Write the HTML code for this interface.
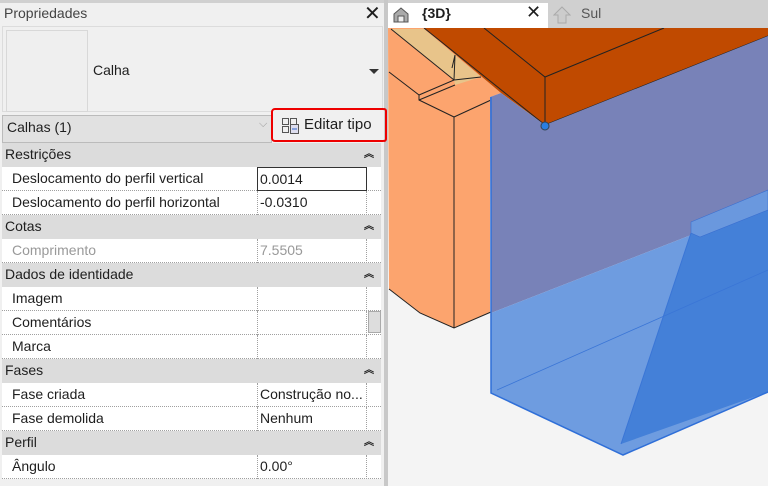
<!DOCTYPE html>
<html><head><meta charset="utf-8"><style>
*{margin:0;padding:0;box-sizing:border-box}
body{width:768px;height:486px;overflow:hidden;background:#d0d0d0;font-family:"Segoe UI","Liberation Sans",sans-serif;font-size:14px;color:#1e1e1e;position:relative}
.a{position:absolute}
.hdr{position:absolute;left:2px;width:379px;height:24px;background:#dcdcdc;padding-left:3px;line-height:23px}
.hdr span{position:absolute;right:7px;top:0;font-size:10px;font-weight:bold}
.row{position:absolute;left:2px;width:379px;height:24px;background:#fff;border-bottom:1px dotted #a0a0a0;line-height:23px}
.row .n{position:absolute;left:10px}
.row .v{position:absolute;left:255px;top:0;width:110px;height:24px;border-left:1px dotted #a0a0a0;padding-left:2px;border-right:1px dotted #a0a0a0}
</style></head><body>
<div class="a" style="left:0;top:0;width:384px;height:486px;background:#f0f0f0"></div>
<div class="a" style="left:0;top:0;width:768px;height:3px;background:#d0d0d0"></div>
<div class="a" style="left:4px;top:5px;color:#444">Propriedades</div>
<div class="a" style="left:364px;top:1px;font-size:20px">✕</div>
<div class="a" style="left:2px;top:26px;width:381px;height:86px;border:1px solid #dcdcdc"></div>
<div class="a" style="left:6px;top:30px;width:82px;height:82px;border:1px solid #d8d8d8;background:#efefef"></div>
<div class="a" style="left:93px;top:62px">Calha</div>
<div class="a" style="left:369px;top:69px;width:0;height:0;border-left:5px solid transparent;border-right:5px solid transparent;border-top:5px solid #333"></div>
<div class="a" style="left:2px;top:115px;width:270px;height:28px;background:#e1e1e1;border:1px solid #bbb;padding:3px 4px">Calhas (1)</div>
<div class="a" style="left:259px;top:118px;color:#999;font-size:11px">⌵</div>
<div class="a" style="left:271px;top:108px;width:116px;height:34px;border:2px solid #e00;border-radius:4px;background:#f0f0f0"></div>
<svg class="a" style="left:282px;top:118px" width="18" height="16"><rect x="0.5" y="0.5" width="6" height="6" fill="none" stroke="#555"/><rect x="8.5" y="0.5" width="6" height="6" fill="none" stroke="#555"/><rect x="0.5" y="8.5" width="6" height="6" fill="none" stroke="#555"/><rect x="8.5" y="6.5" width="8" height="9" fill="#dde" stroke="#555"/><line x1="10" y1="11" x2="15" y2="11" stroke="#36c"/></svg>
<div class="a" style="left:304px;top:116px;font-size:15px">Editar tipo</div>

<div class="hdr" style="top:143px">Restrições<span>︽</span></div>
<div class="row" style="top:167px"><span class="n">Deslocamento do perfil vertical</span><span class="v" style="border:1px solid #333;background:#fff">0.0014</span></div>
<div class="row" style="top:191px"><span class="n">Deslocamento do perfil horizontal</span><span class="v">-0.0310</span></div>
<div class="hdr" style="top:215px">Cotas<span>︽</span></div>
<div class="row" style="top:239px;color:#999"><span class="n">Comprimento</span><span class="v">7.5505</span></div>
<div class="hdr" style="top:263px">Dados de identidade<span>︽</span></div>
<div class="row" style="top:287px"><span class="n">Imagem</span><span class="v"></span></div>
<div class="row" style="top:311px"><span class="n">Comentários</span><span class="v"></span></div>
<div class="row" style="top:335px"><span class="n">Marca</span><span class="v"></span></div>
<div class="hdr" style="top:359px">Fases<span>︽</span></div>
<div class="row" style="top:383px"><span class="n">Fase criada</span><span class="v">Construção no...</span></div>
<div class="row" style="top:407px"><span class="n">Fase demolida</span><span class="v">Nenhum</span></div>
<div class="hdr" style="top:431px">Perfil<span>︽</span></div>
<div class="row" style="top:455px"><span class="n">Ângulo</span><span class="v">0.00°</span></div>
<div class="a" style="left:368px;top:311px;width:13px;height:22px;background:#ddd;border:1px solid #aaa"></div>

<div class="a" style="left:384px;top:0;width:4px;height:486px;background:#c8c8c8"></div>
<div class="a" style="left:384px;top:108px;width:3px;height:34px;border-top:2px solid #e00;border-bottom:2px solid #e00;border-right:2px solid #e00;border-radius:0 4px 4px 0"></div>
<div class="a" style="left:388px;top:3px;width:160px;height:25px;background:#fff"></div>
<svg class="a" style="left:392px;top:6px" width="18" height="18"><path d="M2 8 L9 2 L16 8 L16 16 L2 16Z" fill="#aaa" stroke="#555"/><rect x="6" y="10" width="6" height="6" fill="#eee" stroke="#555"/></svg>
<div class="a" style="left:422px;top:5px;font-weight:bold">{3D}</div>
<div class="a" style="left:526px;top:2px;font-size:18px">✕</div>
<svg class="a" style="left:553px;top:6px" width="18" height="18"><path d="M9 1 L17 9 L13 9 L13 17 L5 17 L5 9 L1 9Z" fill="#ccc" stroke="#aaa"/></svg>
<div class="a" style="left:581px;top:5px;color:#555">Sul</div>

<svg class="a" style="left:388px;top:28px" width="380" height="458" viewBox="388 28 380 458">
<rect x="388" y="28" width="380" height="458" fill="#f4f4f4"/>
<polygon points="388,28 424,28 501,93 490,97 490,312 454,328 420,313 389,289" fill="#fca46e"/>
<polygon points="391,29 424,29 481,77 455,85 454,80" fill="#e8c48a"/>
<polyline points="391,29 454,80" fill="none" stroke="#222"/>
<polyline points="389,72 419,95 419,100 454,117 454,328" fill="none" stroke="#222"/>
<polyline points="419,95 454,80 481,77" fill="none" stroke="#222"/>
<polyline points="419,100 455,85" fill="none" stroke="#222"/>
<polyline points="454,80 455,55 452,68" fill="none" stroke="#222"/>
<polyline points="454,117 491,100" fill="none" stroke="#222"/>
<polyline points="389,289 420,313 454,328 491,312" fill="none" stroke="#222"/>
<polygon points="424,28 768,28 768,36 545,125 501,93" fill="#c04a00"/>
<line x1="545" y1="77" x2="545" y2="125" stroke="#222"/>
<polyline points="484,28 545,77 664,28" fill="none" stroke="#222"/>
<line x1="545" y1="125" x2="768" y2="36" stroke="#222"/>
<line x1="545" y1="125" x2="424" y2="28" stroke="#222"/>
<polygon points="490,97 501,93 545,125 768,36 768,205 491,313" fill="#7882b8"/>
<polygon points="491,313 768,205 768,392 623,455 491,393" fill="#6e9ce0"/>
<polygon points="691,233 768,205 768,392 621,444" fill="#4480d8"/>
<polygon points="691,222 768,190 768,210 700,237 691,233" fill="#6a98de" stroke="#3a6fd0" stroke-width="0.6"/>
<polyline points="491,97 491,393 623,455 768,392" fill="none" stroke="#2f6fd8" stroke-width="1.5"/>
<polyline points="497,390 768,270" fill="none" stroke="#3a75d6" stroke-width="0.8"/>
<line x1="691" y1="233" x2="621" y2="444" stroke="#3a75d6"/>
<circle cx="545" cy="126" r="4" fill="#2a7ee0" stroke="#345"/>
</svg>
</body></html>
